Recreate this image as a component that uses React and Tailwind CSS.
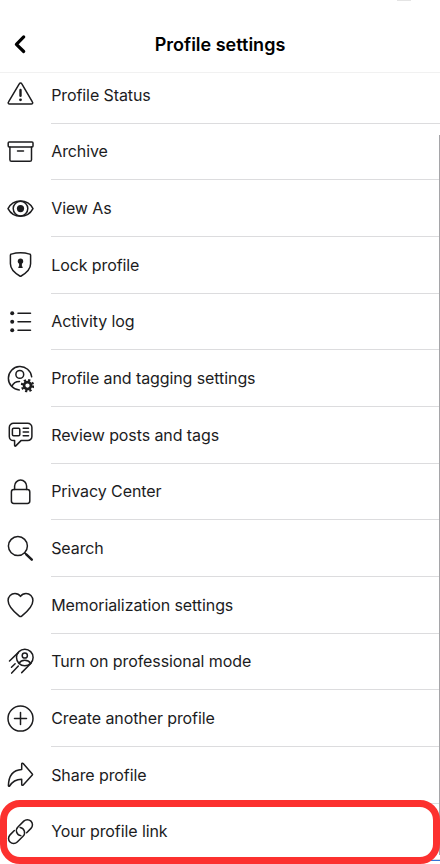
// Shared wrapper, every row icon is drawn on a 28px grid
function Icon({ children, width = 1.5 }) {
  return (
    <svg
      className="size-7 shrink-0"
      viewBox="-0.5 0.2 28 28"
      fill="none"
      stroke="currentColor"
      strokeWidth={width}
      strokeLinecap="round"
      strokeLinejoin="round"
    >
      {children}
    </svg>
  );
}

const items = [
  {
    label: "Profile Status",
    icon: (
      <Icon>
        <path d="M12.9 2.8a1.3 1.3 0 0 1 2.3 0l10.8 18.5a1.3 1.3 0 0 1-1.1 2H3a1.3 1.3 0 0 1-1.1-2z" />
        <path d="M14 9.2v5.8" strokeWidth="2.4" />
        <circle cx="14" cy="19" r="1.4" fill="currentColor" stroke="none" />
      </Icon>
    ),
  },
  {
    label: "Archive",
    icon: (
      <Icon>
        <rect x="1.7" y="4.3" width="24.8" height="4.8" rx="1" />
        <path d="M3.4 9.3v12.6a1.6 1.6 0 0 0 1.6 1.6h18.4a1.6 1.6 0 0 0 1.6-1.6V9.3M11 13.3h6" />
      </Icon>
    ),
  },
  {
    label: "View As",
    icon: (
      <Icon>
        <path d="M1.5 13.8C4 9.1 8.5 6.2 14 6.2S24 9.1 26.5 13.8C24 18.5 19.5 21.4 14 21.4S4 18.5 1.5 13.8z" />
        <circle cx="14" cy="13.8" r="7.3" />
        <circle cx="14" cy="13.8" r="3.6" fill="currentColor" stroke="none" />
      </Icon>
    ),
  },
  {
    label: "Lock profile",
    icon: (
      <Icon>
        <path d="M14 2c3.3 0 6.4.5 9.2 1.3a1.2 1.2 0 0 1 .9 1.2v8.5c0 5.2-4.1 9.1-9.4 12.2a1.4 1.4 0 0 1-1.4 0C8 22.1 3.9 18.2 3.9 13V4.5a1.2 1.2 0 0 1 .9-1.2C7.6 2.5 10.7 2 14 2z" />
        <circle cx="14" cy="10.4" r="2.7" fill="currentColor" stroke="none" />
        <path d="M14 10.8v5.5" strokeWidth="2.8" strokeLinecap="butt" />
        <path d="M12.4 16.4h3.2" strokeWidth="1.4" />
      </Icon>
    ),
  },
  {
    label: "Activity log",
    icon: (
      <Icon>
        <g fill="currentColor" stroke="none">
          <circle cx="5.7" cy="5.5" r="2" />
          <circle cx="5.7" cy="14" r="2" />
          <circle cx="5.7" cy="22.5" r="2" />
        </g>
        <path d="M11.5 5.5h12.5M11.5 14h12.5M11.5 22.5h12.5" />
      </Icon>
    ),
  },
  {
    label: "Profile and tagging settings",
    icon: (
      <Icon>
        <path d="M12.8 25.1A11.7 11.7 0 1 1 25.2 12" />
        <circle cx="13.3" cy="9.6" r="3.9" />
        <path d="M5.5 21.3c1.3-3.3 4-4.7 7.5-4.7" />
        <circle cx="21" cy="20.8" r="3.5" strokeWidth="2.7" />
        <circle
          cx="21"
          cy="20.8"
          r="5.5"
          strokeWidth="2.4"
          strokeLinecap="butt"
          strokeDasharray="2.16 2.16"
        />
      </Icon>
    ),
  },
  {
    label: "Review posts and tags",
    icon: (
      <Icon>
        <path d="M7 2.5h14.2a4.2 4.2 0 0 1 4.2 4.2v8.9a4.2 4.2 0 0 1-4.2 4.2h-6.7l-5.2 5.3a.7.7 0 0 1-1.2-.5v-4.8H7a4.2 4.2 0 0 1-4.2-4.2V6.7A4.2 4.2 0 0 1 7 2.5z" />
        <rect x="5.9" y="7.4" width="7.4" height="7.6" rx="1.2" />
        <path d="M16.7 7.4h5.3M16.7 11.2h5.3M16.7 15h5.3" />
      </Icon>
    ),
  },
  {
    label: "Privacy Center",
    icon: (
      <Icon>
        <rect x="4.9" y="11.7" width="18.4" height="13.9" rx="2.4" />
        <path d="M8.1 11.7V8.3a6 6 0 0 1 12 0v3.4" />
      </Icon>
    ),
  },
  {
    label: "Search",
    icon: (
      <Icon>
        <circle cx="11.4" cy="11.3" r="9.5" />
        <path d="m18.2 18.1 2 2" />
        <path d="m20 19.9 5.3 5" strokeWidth="2.5" />
      </Icon>
    ),
  },
  {
    label: "Memorialization settings",
    icon: (
      <Icon>
        <path d="M14 5.6C15.3 3.7 17.3 2.7 19.5 2.7c3.9 0 6.9 3 6.9 7.1 0 5.8-4.4 10.2-11.2 15.5a1.9 1.9 0 0 1-2.4 0C6 20 1.6 15.6 1.6 9.8c0-4.1 3-7.1 6.9-7.1 2.2 0 4.2 1 5.5 2.9z" />
      </Icon>
    ),
  },
  {
    label: "Turn on professional mode",
    icon: (
      <Icon>
        <circle cx="18.3" cy="9.7" r="8.3" />
        <circle cx="18.3" cy="7.7" r="2.6" />
        <path d="M12.6 15.3c1.3-2 3.2-2.9 5.7-2.9s4.4.9 5.7 2.9" />
        <path d="M11.7 4.8 3 13.2M8.6 16l-3.6 3.4M11.8 18.3l-6.6 7M24.5 15.5l-9.3 9.3" />
      </Icon>
    ),
  },
  {
    label: "Create another profile",
    icon: (
      <Icon>
        <circle cx="14" cy="13.8" r="12.5" />
        <path d="M14 7.8v12M8 13.8h12" />
      </Icon>
    ),
  },
  {
    label: "Share profile",
    icon: (
      <Icon>
        <path d="M15.2 3.3v5.4C7 9.2 2.2 14.6 1.9 24.8c0 .8.8 1 1.2.4 2.6-4.4 6.2-6.7 12.1-6.8v5.2c0 .8.9 1.2 1.5.6l9.1-9.9a.9.9 0 0 0 0-1.2L16.7 2.7c-.6-.6-1.5-.2-1.5.6z" />
      </Icon>
    ),
  },
  {
    label: "Your profile link",
    icon: (
      <Icon>
        <g transform="translate(14 13.8) rotate(-45)">
          <path d="M-2.6 3.1A5.1 5.1 0 0 1 1.5-5.1H9.7A5.1 5.1 0 0 1 9.7 5.1H3.6" />
          <path d="M2.6-3.1A5.1 5.1 0 0 1-1.5 5.1H-9.7A5.1 5.1 0 0 1-9.7-5.1H-3.6" />
        </g>
      </Icon>
    ),
  },
];

export default function App() {
  return (
    <div className="relative h-[864px] w-[440px] overflow-hidden bg-white font-['Inter',sans-serif] text-[#1c1c1e]">
      <header className="grid h-[73px] grid-cols-[40px_1fr_40px] items-center border-b border-[#f1f1f1] pt-4">
        <svg
          className="ml-[13px] h-[20px] w-[14px] text-black"
          viewBox="0 0 14 20"
          fill="none"
          stroke="currentColor"
          strokeWidth="3.2"
          strokeLinecap="round"
          strokeLinejoin="round"
        >
          <path d="M10.7 2.9 3.4 10.3l7.3 7.2" />
        </svg>
        <h1 className="text-center text-[18px] font-semibold text-black">Profile settings</h1>
      </header>

      <ul className="-mt-[6px]">
        {items.map((item) => (
          <li key={item.label} className="flex h-[56.67px] items-center pl-[6px]">
            {item.icon}
            <span className="ml-[17.2px] flex h-full flex-1 items-center border-b border-[#dcdcde] text-[16px] tracking-[-0.09px]">
              {item.label}
            </span>
          </li>
        ))}
      </ul>

      {/* Status bar remnant and scrollbar */}
      <div className="absolute top-0 left-[397px] h-px w-[14px] bg-[#e4e4e4]" />
      <div className="absolute top-[135px] right-0 h-[720px] w-px bg-[#a5a5a8]" />

      {/* Highlight around the last row */}
      <div className="absolute right-0 bottom-[3px] h-px w-[10px] bg-[#3273d8]" />
      <div className="absolute top-[800px] left-0 h-[64px] w-[440px] rounded-[20px] border-[7px] border-[#fc312f]" />
    </div>
  );
}
